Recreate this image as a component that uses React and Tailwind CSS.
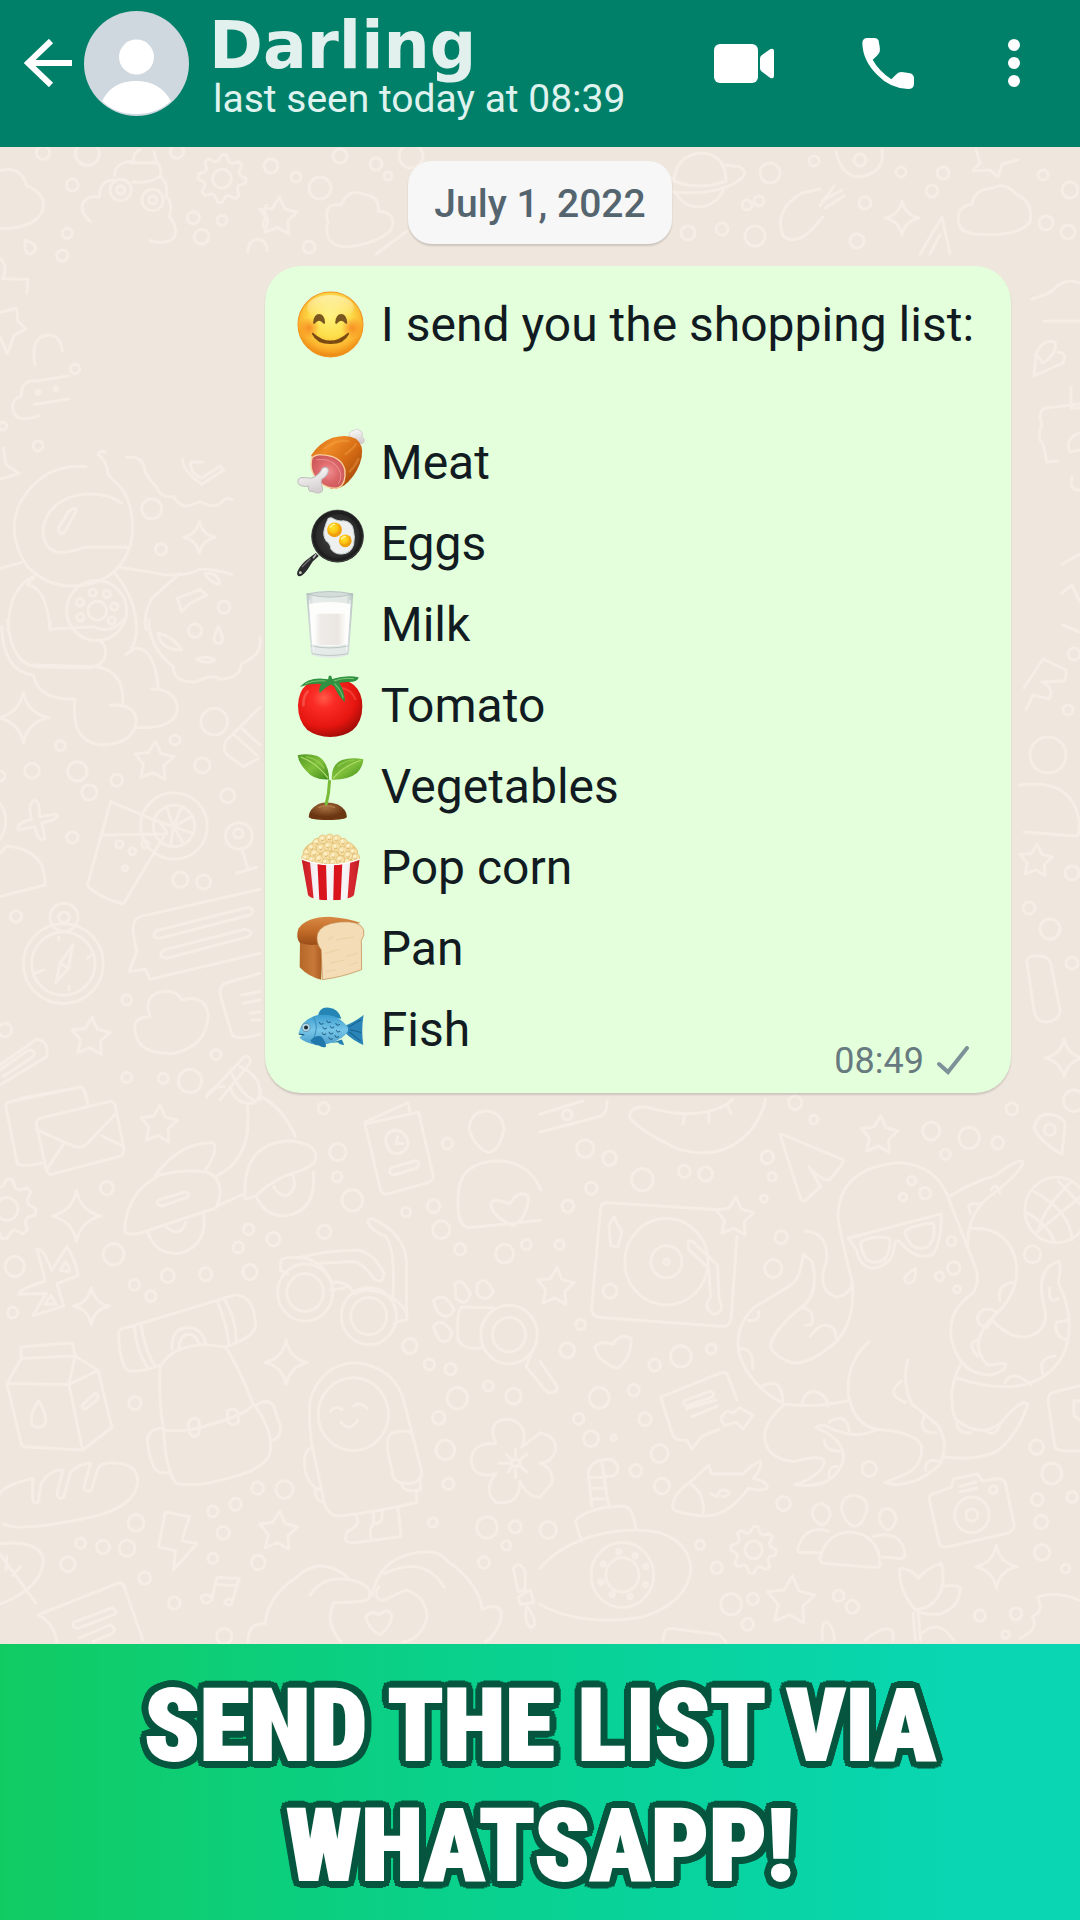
import React from 'react';

const shoppingList = [
  { id: 'meat', label: 'Meat', Icon: MeatIcon },
  { id: 'eggs', label: 'Eggs', Icon: EggsIcon },
  { id: 'milk', label: 'Milk', Icon: MilkIcon },
  { id: 'tomato', label: 'Tomato', Icon: TomatoIcon },
  { id: 'vegetables', label: 'Vegetables', Icon: SproutIcon },
  { id: 'popcorn', label: 'Pop corn', Icon: PopcornIcon },
  { id: 'pan', label: 'Pan', Icon: BreadIcon },
  { id: 'fish', label: 'Fish', Icon: FishIcon },
];

/* ---------- Emoji ---------- */

function Emoji({ viewBox, children }) {
  return (
    <svg viewBox={viewBox} className="size-[67px] shrink-0 overflow-visible" aria-hidden="true">
      {children}
    </svg>
  );
}

function SmileIcon() {
  return (
    <Emoji viewBox="0 0 200 200">
      <defs>
        <radialGradient id="smileFace" cx="50%" cy="38%" r="62%">
          <stop offset="0" stopColor="#fff27a" />
          <stop offset="0.5" stopColor="#fdde4a" />
          <stop offset="0.8" stopColor="#fbb02b" />
          <stop offset="1" stopColor="#ea8412" />
        </radialGradient>
        <radialGradient id="smileCheek">
          <stop offset="0" stopColor="#f6791c" stopOpacity="0.75" />
          <stop offset="1" stopColor="#f6791c" stopOpacity="0" />
        </radialGradient>
        <linearGradient id="smileShine" x2="0" y2="1">
          <stop offset="0" stopColor="#fff" stopOpacity="0.5" />
          <stop offset="1" stopColor="#fff" stopOpacity="0" />
        </linearGradient>
      </defs>
      <circle cx="100" cy="100" r="97" fill="url(#smileFace)" stroke="#f0951f" strokeWidth="3" />
      <ellipse cx="100" cy="50" rx="70" ry="38" fill="url(#smileShine)" />
      <circle cx="36" cy="110" r="32" fill="url(#smileCheek)" />
      <circle cx="164" cy="110" r="32" fill="url(#smileCheek)" />
      <path d="M51 95Q53 72 66 72T81 95Q66 76 51 95ZM117 95Q119 72 132 72T147 95Q132 76 117 95Z" fill="#7a5720" stroke="#7a5720" strokeWidth="6" strokeLinejoin="round" />
      <path d="M47 127Q99 174 153 127Q140 156 100 156T47 127Z" fill="#7a4a12" stroke="#7a4a12" strokeWidth="5" strokeLinejoin="round" />
    </Emoji>
  );
}

function MeatIcon() {
  return (
    <Emoji viewBox="52 58 200 200">
      <defs>
        <linearGradient id="meatSkin" x1="0" x2="1" y2="0.9">
          <stop offset="0" stopColor="#c9640f" />
          <stop offset="0.3" stopColor="#ee8a26" />
          <stop offset="0.6" stopColor="#d46a14" />
          <stop offset="1" stopColor="#97400a" />
        </linearGradient>
        <radialGradient id="meatCut">
          <stop offset="0" stopColor="#f09090" />
          <stop offset="0.6" stopColor="#dd686b" />
          <stop offset="1" stopColor="#cf5a5c" />
        </radialGradient>
        <linearGradient id="meatBone" x2="0.3" y2="1">
          <stop offset="0" stopColor="#fff" />
          <stop offset="1" stopColor="#d5cfd0" />
        </linearGradient>
      </defs>
      <path d="M207 82Q207 62 222 63Q230 54 240 63Q251 67 246 80Q258 92 249 100Q238 107 232 96Z" fill="url(#meatBone)" stroke="#c7c5c8" strokeWidth="2" />
      <path d="M94 137Q118 99 158 84Q202 72 228 87Q252 106 245 142Q237 181 206 215Q184 239 153 237Z" fill="url(#meatSkin)" />
      <path d="M134 116Q172 88 204 94M197 133Q222 115 228 103M209 185Q227 168 235 148" stroke="#f8b04a" strokeWidth="7" fill="none" strokeLinecap="round" opacity="0.35" />
      <path d="M97 143Q109 133 126 135Q184 137 195 180Q199 222 176 233Q150 240 122 219Q85 186 97 143Z" fill="url(#meatCut)" stroke="#fbd3a0" strokeWidth="4" />
      <path d="M109 150Q163 142 181 188Q186 211 174 222" stroke="#f0a0a0" strokeWidth="3" fill="none" opacity="0.7" />
      <path d="M133 173Q147 171 145 185Q142 198 127 207Q121 215 127 229Q133 246 117 249Q106 250 98 244Q85 246 86 229Q65 231 56 221Q50 207 66 203Q80 203 94 205Q114 198 123 184Q126 174 133 173Z" fill="url(#meatBone)" stroke="#c2bec0" strokeWidth="3" />
    </Emoji>
  );
}

function EggsIcon() {
  return (
    <Emoji viewBox="52 301 200 200">
      <defs>
        <radialGradient id="panBody">
          <stop offset="0" stopColor="#4a4a4a" />
          <stop offset="0.8" stopColor="#2b2b2b" />
          <stop offset="1" stopColor="#1a1a1a" />
        </radialGradient>
        <radialGradient id="yolk" cx="40%" cy="35%">
          <stop offset="0" stopColor="#ffe62e" />
          <stop offset="0.7" stopColor="#fcc011" />
          <stop offset="1" stopColor="#ee9d0c" />
        </radialGradient>
      </defs>
      <path d="M117 438L108 429L92 441Q62 462 53 485Q50 498 60 499Q70 498 84 478Q95 462 99 455Z" fill="#2c2c2e" />
      <path d="M109 433L100 445" stroke="#b9b9b9" strokeWidth="5" />
      <path d="M91 447L68 470" stroke="#77777a" strokeWidth="4" strokeLinecap="round" />
      <circle cx="62" cy="488" r="4" fill="#c8d5c4" />
      <circle cx="173" cy="380" r="78" fill="#1b1b1b" />
      <circle cx="173" cy="378" r="77" fill="url(#panBody)" stroke="#5a5a5a" strokeWidth="2" />
      <circle cx="173" cy="379" r="68" fill="none" stroke="#1d1d1d" strokeWidth="3" />
      <path d="M145 327Q154 321 164 329Q176 335 190 333Q215 335 220 359Q226 382 221 405Q212 431 187 432Q168 435 153 417Q152 401 139 393Q128 378 134 357Q138 340 145 327Z" fill="#edf0ee" stroke="#cfd3d3" strokeWidth="3" />
      <circle cx="164" cy="360" r="22" fill="url(#yolk)" />
      <circle cx="196" cy="393" r="19" fill="url(#yolk)" />
      <path d="M151 352Q156 344 164 344M185 387Q189 380 196 380" stroke="#fff6a8" strokeWidth="4" fill="none" strokeLinecap="round" />
    </Emoji>
  );
}

function MilkIcon() {
  return (
    <Emoji viewBox="52 544 200 200">
      <defs>
        <linearGradient id="milkGlass">
          <stop offset="0" stopColor="#b9c4c4" />
          <stop offset="0.15" stopColor="#e6ecea" />
          <stop offset="0.85" stopColor="#e2e9e6" />
          <stop offset="1" stopColor="#b4c0bf" />
        </linearGradient>
        <linearGradient id="milkFill">
          <stop offset="0" stopColor="#fff" />
          <stop offset="0.2" stopColor="#efebe8" />
          <stop offset="0.75" stopColor="#ebe6e1" />
          <stop offset="1" stopColor="#fffefd" />
        </linearGradient>
      </defs>
      <path d="M80 552Q150 534 220 552L207 730Q200 743 150 744Q100 743 94 730Z" fill="url(#milkGlass)" />
      <path d="M81 553Q150 572 219 553Q150 538 81 553Z" fill="#d5dddb" stroke="#a8b6b4" strokeWidth="2" />
      <path d="M88 583Q150 570 212 583L203 702Q150 714 97 702Z" fill="#fdfdfc" />
      <path d="M102 612H199L194 702Q150 709 106 702Z" fill="url(#milkFill)" />
      <path d="M94 708Q150 720 206 708M97 731Q150 742 204 731" stroke="#a9b5b2" strokeWidth="2" fill="none" />
      <path d="M90 570L101 722M211 570L200 722" stroke="#fff" strokeWidth="3" opacity="0.8" />
    </Emoji>
  );
}

function TomatoIcon() {
  return (
    <Emoji viewBox="52 787 200 200">
      <defs>
        <radialGradient id="tomatoBody" cx="40%" cy="32%" r="72%">
          <stop offset="0" stopColor="#ff5a4a" />
          <stop offset="0.25" stopColor="#fb2c25" />
          <stop offset="0.7" stopColor="#e5150f" />
          <stop offset="1" stopColor="#9d0b07" />
        </radialGradient>
      </defs>
      <path d="M80 825Q113 802 150 813Q196 804 222 826Q247 848 247 889Q247 935 218 961Q191 981 151 981Q111 980 83 960Q55 933 55 887Q56 846 80 825Z" fill="url(#tomatoBody)" />
      <path d="M84 845Q70 861 71 886" stroke="#ff9a8c" strokeWidth="8" fill="none" strokeLinecap="round" opacity="0.35" />
      <path d="M186 835Q215 840 226 868" stroke="#ff8070" strokeWidth="7" fill="none" strokeLinecap="round" opacity="0.3" />
      <path d="M60 832Q85 804 128 807L145 809L147 798H154L157 808Q200 795 236 803Q236 817 205 817L178 819Q195 845 195 877Q178 862 163 830L153 824Q133 834 120 850Q115 835 125 823Q92 820 60 832Z" fill="#2f9141" />
      <path d="M77 823Q103 811 137 814M162 814Q190 803 222 807M164 822Q184 842 190 865" stroke="#7cc36d" strokeWidth="3" fill="none" />
    </Emoji>
  );
}

function SproutIcon() {
  return (
    <Emoji viewBox="52 40 200 200">
      <defs>
        <linearGradient id="leaf" x2="1" y2="1">
          <stop offset="0" stopColor="#4f9a24" />
          <stop offset="0.5" stopColor="#80c03a" />
          <stop offset="1" stopColor="#3f8a1c" />
        </linearGradient>
        <radialGradient id="soil" cx="45%" cy="30%">
          <stop offset="0" stopColor="#a9703f" />
          <stop offset="1" stopColor="#6b3713" />
        </radialGradient>
      </defs>
      <path d="M87 230Q88 207 116 192Q144 183 174 194Q200 208 201 230Q200 239 144 240Q88 239 87 230Z" fill="url(#soil)" />
      <path d="M139 193Q148 160 149 124" stroke="#79bb39" strokeWidth="9" fill="none" strokeLinecap="round" />
      <path d="M54 47Q82 39 113 49Q146 65 148 119Q104 123 79 93Q57 70 54 47Z" fill="url(#leaf)" />
      <path d="M156 120Q153 75 186 61Q217 51 250 59Q249 80 231 100Q205 121 156 120Z" fill="url(#leaf)" />
      <path d="M63 52Q109 68 145 115M159 116Q194 77 242 62" stroke="#b4df70" strokeWidth="3" fill="none" />
      <path d="M81 52Q112 55 132 85M174 79Q194 63 221 61" stroke="#a9da62" strokeWidth="5" fill="none" opacity="0.5" strokeLinecap="round" />
      <path d="M117 202Q140 194 164 202" stroke="#c08a58" strokeWidth="4" fill="none" strokeLinecap="round" opacity="0.7" />
    </Emoji>
  );
}

const kernels = [
  [83, 340, 13], [78, 355, 12], [96, 325, 13], [112, 309, 13], [129, 299, 13], [150, 296, 13], [171, 299, 13],
  [190, 309, 13], [207, 322, 13], [220, 338, 13], [227, 354, 12], [105, 342, 14], [124, 326, 14], [146, 320, 14],
  [168, 323, 14], [188, 334, 14], [205, 348, 13], [97, 361, 12], [119, 358, 13], [140, 346, 14], [162, 349, 14],
  [181, 360, 13], [203, 366, 10], [138, 368, 11], [160, 369, 11],
];

function PopcornIcon() {
  return (
    <Emoji viewBox="52 283 200 200">
      <defs>
        <clipPath id="bucket">
          <path d="M66 358Q152 391 239 358L222 465Q210 480 152 481Q95 480 85 465Z" />
        </clipPath>
        <linearGradient id="bucketShade">
          <stop offset="0" stopColor="#700" stopOpacity="0.3" />
          <stop offset="0.3" stopColor="#fff" stopOpacity="0" />
          <stop offset="0.7" stopColor="#fff" stopOpacity="0" />
          <stop offset="1" stopColor="#700" stopOpacity="0.35" />
        </linearGradient>
      </defs>
      <ellipse cx="152" cy="340" rx="82" ry="44" fill="#e9c981" />
      {kernels.map(([x, y, r]) => (
        <g key={`${x}-${y}`}>
          <circle cx={x} cy={y} r={r} fill="#f6e0a6" stroke="#dfbd74" strokeWidth="2" />
          <path d={`M${x - 5} ${y + 3}q5 5 9 -2`} stroke="#c39a4c" strokeWidth="2" fill="none" />
          <circle cx={x - 3} cy={y - 4} r="4" fill="#fdf3cf" />
        </g>
      ))}
      <g clipPath="url(#bucket)">
        <path d="M60 340H245V490H60Z" fill="#f6f3f7" />
        <path d="M64 350H89L103 490H82ZM112 350H138L142 490H119ZM163 350H188L182 490H160ZM212 350H242L224 490H202Z" fill="#d9141c" />
        <path d="M60 340H245V490H60Z" fill="url(#bucketShade)" />
      </g>
      <path d="M66 358Q152 391 239 358" stroke="#fff" strokeWidth="4" fill="none" />
    </Emoji>
  );
}

function BreadIcon() {
  return (
    <Emoji viewBox="52 526 200 200">
      <defs>
        <linearGradient id="crustTop" x2="0" y2="1">
          <stop offset="0" stopColor="#d98a45" />
          <stop offset="0.5" stopColor="#c26c28" />
          <stop offset="1" stopColor="#9a4d18" />
        </linearGradient>
        <linearGradient id="crustSide">
          <stop offset="0" stopColor="#b46728" />
          <stop offset="0.6" stopColor="#c8793a" />
          <stop offset="1" stopColor="#a9591f" />
        </linearGradient>
      </defs>
      <path d="M61 600L115 612L128 624L124 719Q86 710 60 682Z" fill="url(#crustSide)" />
      <path d="M60 609Q48 593 56 567Q80 531 149 531Q204 535 242 550L130 570L114 614Q83 618 60 609Z" fill="url(#crustTop)" />
      <path d="M128 719L124 630Q107 608 113 583Q122 553 178 547Q240 541 251 570Q255 588 244 602L245 689Q190 711 128 719Z" fill="#f3dcb6" stroke="#c08346" strokeWidth="2" />
      <path d="M135 640L180 629M150 670L190 661M170 600L220 592M145 600L160 590M200 650L230 641M208 676L232 668M141 695L166 690" stroke="#ecd0a4" strokeWidth="3" strokeLinecap="round" />
    </Emoji>
  );
}

function FishIcon() {
  return (
    <Emoji viewBox="52 769 200 200">
      <defs>
        <linearGradient id="fishBody" x2="0" y2="1">
          <stop offset="0" stopColor="#3a9ccf" />
          <stop offset="0.5" stopColor="#76c6e8" />
          <stop offset="1" stopColor="#4a9ecb" />
        </linearGradient>
      </defs>
      <path d="M114 829Q120 799 148 804Q177 808 184 837Z" fill="#2585b5" />
      <path d="M188 861Q228 845 251 825Q243 869 250 915Q221 904 192 876Z" fill="#2b84b8" />
      <path d="M207 861L243 840M210 870L244 878M208 876L242 904" stroke="#17628f" strokeWidth="3" />
      <path d="M152 909L186 899L193 915Q180 915 174 907Z" fill="#2480b0" />
      <path d="M56 880Q66 838 114 826Q173 818 204 863Q206 876 198 883Q174 910 116 916Q74 910 59 893L70 884Z" fill="url(#fishBody)" />
      <path d="M101 833Q121 864 94 909" stroke="#3b8ebb" strokeWidth="3" fill="none" />
      <path d="M92 902Q108 883 125 890Q140 908 138 921Q129 925 116 916Q105 918 92 902Z" fill="#1f77ac" />
      <path d="M119 848q4 9 11 3M141 843q4 9 11 3M129 862q4 9 11 3M151 859q4 9 11 3M168 851q4 9 11 3M127 879q4 9 11 3M148 877q4 9 11 3M169 871q4 9 11 3M147 893q4 9 11 3M165 887q4 9 11 3" stroke="#25648b" strokeWidth="3" fill="none" strokeLinecap="round" />
      <circle cx="79" cy="863" r="12" fill="#b9dbe8" stroke="#4d7e96" strokeWidth="2" />
      <circle cx="79" cy="863" r="6" fill="#1f2c35" />
      <path d="M59 883L72 885" stroke="#155a82" strokeWidth="4" strokeLinecap="round" />
    </Emoji>
  );
}

/* ---------- Wallpaper ---------- */

function starPath(cx, cy, r) {
  const points = [];
  for (let i = 0; i < 10; i++) {
    const a = (i * Math.PI) / 5 - 1.5;
    const d = i % 2 ? r * 0.52 : r;
    points.push(`${(cx + d * Math.cos(a)).toFixed(1)} ${(cy + d * Math.sin(a)).toFixed(1)}`);
  }
  return `M${points.join('L')}Z`;
}

function sparklePath(x, y, r) {
  const k = r * 0.17;
  return `M${x} ${y - r}Q${x + k} ${y - k} ${x + r} ${y}Q${x + k} ${y + k} ${x} ${y + r}Q${x - k} ${y + k} ${x - r} ${y}Q${x - k} ${y - k} ${x} ${y - r}Z`;
}

function gearPath(cx, cy, r) {
  const points = [];
  for (let i = 0; i < 32; i++) {
    const a = (i * Math.PI) / 16;
    const d = i % 4 < 2 ? r : r * 0.76;
    points.push(`${(cx + d * Math.cos(a)).toFixed(1)} ${(cy + d * Math.sin(a)).toFixed(1)}`);
  }
  return `M${points.join('L')}Z`;
}

function Bubbles({ items }) {
  return items.map(([x, y, r]) => <circle key={`${x}-${y}`} cx={x} cy={y} r={r} />);
}

function Wallpaper() {
  return (
    <svg
      viewBox="0 147 1080 1497"
      preserveAspectRatio="xMidYMin slice"
      className="absolute inset-0 size-full [&_*]:[vector-effect:non-scaling-stroke]"
      fill="none"
      stroke="#f6ede7"
      strokeWidth="3"
      strokeLinecap="round"
      strokeLinejoin="round"
      aria-hidden="true"
    >
      {/* top row behind the date */}
      <g>
        <Bubbles
          items={[
            [271, 166, 7], [296, 177, 5], [320, 188, 11], [340, 156, 7], [376, 164, 6], [388, 176, 4], [411, 156, 12],
            [309, 247, 6], [770, 173, 10], [814, 161, 5], [901, 172, 5], [943, 173, 6], [932, 191, 6], [865, 203, 6],
            [747, 205, 5], [759, 201, 5], [688, 233, 7], [722, 229, 6], [755, 236, 10], [857, 241, 7], [860, 160, 6],
            [1043, 175, 5], [1070, 190, 8], [1046, 223, 7], [1068, 232, 7],
          ]}
        />
        <path d={starPath(278, 217, 20)} />
        <path d={sparklePath(902, 218, 17)} />
        <path d="M328 222Q322 203 341 205Q349 187 366 195Q380 197 378 211Q398 212 391 230Q377 244 345 247Q322 244 328 222ZM376 254L406 232" />
        <path d="M674 181Q676 155 702 153Q726 155 726 181Q700 191 674 181ZM672 178Q661 188 674 192Q714 196 738 181Q750 173 740 167L726 165M676 193Q684 207 699 207Q718 205 724 188" />
        <path d="M783 236Q773 210 802 193L820 189M783 236Q797 247 815 226L823 217M820 206L834 186M822 201L842 190M825 208L844 196" />
        <path d="M836 152Q842 177 860 177Q885 173 882 150M976 150L980 163L973 171L990 170L998 177L1002 164L1018 160" />
        <path d="M959 223Q955 207 972 204Q974 189 993 188Q1005 181 1017 195Q1033 201 1030 222Q1017 238 974 234Q960 232 959 223ZM920 254L942 217L950 254M930 254L940 235" />
        <path d="M1032 299Q1050 294 1054 289Q1066 277 1080 283M1044 321H1080M1036 354Q1043 338 1055 342Q1058 353 1043 363L1036 354L1034 376L1063 363Q1068 353 1058 352M1080 404L1046 408Q1037 410 1042 425Q1036 437 1043 444L1047 462L1058 461M1071 387V408H1080M1080 433Q1064 438 1070 452L1080 450M1072 477Q1068 490 1080 490M1062 564L1080 554M1062 593L1072 585L1080 602M1063 625L1080 632" />
        <path d="M1024 688L1043 659L1066 670Q1067 683 1060 681L1042 682Q1055 688 1049 699L1033 695L1026 710" />
        <circle cx="1048" cy="755" r="18" />
        <path d="M1020 785Q1072 778 1079 820Q1080 836 1076 836L1024 832" />
        <path d={starPath(1036, 861, 17)} />
        <Bubbles items={[[1068, 710, 5], [1074, 654, 6], [1072, 873, 7], [1029, 908, 6], [1050, 929, 10], [1072, 963, 6]]} />
        <path d="M1027 962Q1026 955 1040 956Q1048 956 1051 964L1060 1010Q1060 1021 1046 1022Q1036 1022 1034 1010Z" />
        <path d={sparklePath(1064, 1058, 19)} />
      </g>

      {/* upper left */}
      <g transform="translate(0 150) scale(0.3333)">
        <Bubbles
          items={[
            [129, 8, 20], [262, 10, 36], [531, 5, 20], [217, 105, 18], [202, 250, 15], [187, 317, 17], [580, 203, 18],
            [666, 211, 15], [605, 260, 22], [225, 657, 14], [666, 86, 28], [362, 120, 32], [362, 120, 12], [458, 150, 32],
            [458, 150, 12], [8, 828, 12], [114, 888, 15], [455, 1077, 30], [483, 1198, 17], [672, 1372, 18], [115, 727, 6],
            [168, 716, 6],
          ]}
        />
        <path d={gearPath(666, 86, 72)} />
        <path d={sparklePath(598, 1162, 48)} />
        <path d="M0 62Q62 45 80 107Q135 130 130 172Q117 235 0 236M272 215Q235 185 251 155Q263 136 299 141Q297 92 340 90M343 78Q345 35 400 34Q400 5 420 0M389 38H470Q490 55 480 80Q440 102 398 96M470 38L462 5M482 82Q505 96 499 140Q520 160 508 200Q540 240 518 268Q490 285 450 272M795 235Q780 225 800 200Q785 180 800 165M744 305Q745 268 775 267Q800 270 802 302M75 270Q110 280 107 300Q85 325 75 297Z" />
        <path d="M0 325Q25 350 8 386L84 388L80 430M0 487L50 475L53 513L77 537L42 555L22 612L0 560M105 645Q90 555 148 555Q180 555 187 603M118 797Q40 825 37 770Q38 745 63 740Q65 685 110 693L205 678M104 763Q150 757 205 747M10 895L18 945L58 970L0 988" />
        <path d="M258 950Q130 940 62 1055Q15 1150 82 1250Q150 1320 250 1306Q360 1290 393 1180Q410 1080 365 1015L325 975Q320 930 295 915Q300 900 315 905M365 1060Q320 1025 240 1034Q150 1050 130 1130Q125 1200 180 1208Q220 1205 250 1192H380M205 1085Q230 1065 228 1085L195 1145Q178 1160 175 1135Z" />
        <path d="M380 922Q430 915 435 965Q455 1000 470 1010Q480 1045 520 1040Q540 1072 565 1068L600 1055Q640 1075 660 1062Q675 1040 697 1048M548 928Q545 960 605 1003L672 960L660 948L605 985Q565 965 573 935L608 937" />
        <path d="M0 1255L65 1238M355 1252Q430 1262 490 1274Q560 1280 600 1257Q650 1258 695 1273M345 1270Q410 1350 410 1440M540 1270L455 1345Q425 1410 440 1440M105 1278Q25 1310 25 1440M105 1278L82 1305Q140 1310 150 1440M532 1345L600 1318L620 1335L570 1360L545 1385ZM615 1270Q660 1270 658 1303Q630 1300 615 1270Z" />
        <circle cx="290" cy="1382" r="90" />
        <Bubbles items={[[292, 1382, 28], [278, 1328, 11], [320, 1332, 11], [240, 1357, 11], [343, 1370, 11], [241, 1402, 11], [335, 1412, 11]]} />
      </g>

      {/* left edge */}
      <g transform="translate(0 620) scale(0.3333)">
        <Bubbles
          items={[
            [585, 32, 20], [643, 305, 40], [181, 377, 15], [525, 360, 15], [96, 452, 22], [232, 454, 29], [350, 481, 18],
            [268, 517, 23], [607, 436, 23], [0, 468, 15], [683, 527, 21], [217, 652, 17], [541, 779, 23], [611, 786, 21],
            [358, 673, 11], [436, 673, 11], [397, 694, 10], [375, 745, 8], [48, 889, 17], [380, 1140, 15], [15, 1230, 20],
            [648, 1304, 15], [380, 1373, 15], [490, 1375, 15], [570, 1383, 35], [717, 648, 40], [715, 640, 14],
            [522, 618, 100], [522, 618, 62], [190, 1031, 120], [190, 1031, 95], [192, 892, 42], [192, 892, 16],
          ]}
        />
        <path d={sparklePath(70, 293, 76)} />
        <path d={starPath(462, 425, 62)} />
        <path d={starPath(272, 1252, 60)} />
        <path d="M22 0Q35 135 110 140L270 144Q330 130 313 75L298 60M5 20Q10 155 100 165Q115 240 225 238Q210 370 310 375Q405 370 409 300Q400 250 330 256M100 135L290 140Q375 155 368 250M409 322Q530 330 533 260Q520 205 455 207M475 207Q465 80 405 85L378 103M408 0Q415 50 395 85M150 0V28L280 20Q330 45 370 0M447 0Q445 80 520 140Q520 190 590 185Q640 160 660 178Q720 175 725 130Q790 105 780 50M475 40Q480 90 545 90Q520 50 475 40ZM655 20Q630 70 655 70T655 20ZM590 118Q620 105 645 120Q620 135 590 118Z" />
        <path d="M780 262L680 360Q665 385 682 405L730 440L775 415M725 325L780 375M700 342L770 405M105 540Q120 545 118 590L170 582Q180 600 125 608L135 655Q115 670 105 620L55 630Q45 610 95 598Q80 550 105 540Z" />
        <path d="M332 545L262 795Q290 830 370 852L500 635L480 607ZM307 645L500 642M520 620L465 600M520 620L500 562M520 620L545 560M520 620L575 590M520 620L580 640M520 620L550 670M520 620L512 678M0 550Q35 600 0 658M0 830L135 795Q140 690 20 678L0 700M725 685L745 750M710 760L770 742" />
        <path d="M218 975L205 1045L168 1088L180 1030ZM180 1030L205 1045M177 950V960M275 1005L262 1015M105 1060L130 1050M207 1110V1098" />
        <path d="M780 808L420 890Q395 900 400 940L410 995L388 1055L437 1048L450 1078L780 1000M470 932L745 862Q770 870 750 885L480 955Q450 955 470 932ZM490 990L735 928Q765 935 745 950L500 1015Q470 1010 490 990Z" />
        <path d="M405 1230Q400 1190 450 1190Q425 1120 500 1113Q535 1115 545 1140Q615 1120 625 1185Q620 1280 520 1300Q410 1305 405 1230ZM780 1060L675 1090Q655 1100 662 1130L695 1240Q700 1265 780 1243M725 1125L780 1115M730 1150L780 1140M750 1180L780 1175M755 1200L780 1200M0 1335L110 1258Q150 1265 140 1310L0 1395M0 1350L85 1290Q110 1290 100 1310L10 1370M60 1435L240 1402Q255 1405 260 1440M620 1430L735 1308Q755 1310 750 1330L660 1440M690 1350Q720 1420 760 1440M720 1340Q790 1370 780 1440" />
      </g>

      {/* lower left */}
      <g transform="translate(0 1090) scale(0.3444 0.3571)">
        <Bubbles
          items={[
            [940, 51, 16], [981, 174, 24], [979, 243, 14], [1023, 309, 30], [310, 275, 19], [330, 460, 30], [43, 494, 28],
            [37, 623, 15], [722, 390, 15], [794, 418, 19], [692, 441, 15], [942, 397, 19], [726, 510, 21], [487, 520, 19],
            [597, 516, 18], [390, 546, 15], [438, 577, 15], [1179, 342, 13], [1259, 325, 18], [1281, 391, 25], [1336, 446, 16],
            [1465, 458, 26], [1528, 433, 14], [1299, 150, 15], [1190, 717, 21], [1247, 769, 15], [1308, 782, 16],
            [1418, 829, 14], [1328, 863, 30], [1491, 857, 22], [1274, 918, 18], [1293, 1008, 27], [1302, 1103, 16],
            [392, 877, 18], [748, 1115, 17], [826, 1119, 25], [684, 1160, 17], [618, 1180, 15], [648, 1240, 18],
            [395, 1212, 23], [369, 1283, 23], [299, 1280, 19], [234, 1269, 14], [197, 1328, 21], [618, 1311, 14],
            [750, 1323, 20], [420, 1367, 17], [506, 1437, 17], [651, 1530, 22], [1257, 1211, 13], [1414, 1225, 30],
            [1496, 1223, 17], [1470, 1275, 13], [1405, 1323, 16], [20, 333, 32], [886, 567, 80], [886, 567, 53],
            [1071, 633, 80], [1071, 633, 52], [1478, 685, 82], [1478, 685, 48], [1026, 908, 102],
          ]}
        />
        <path d={starPath(461, 98, 56)} />
        <path d={starPath(808, 1237, 58)} />
        <path d={sparklePath(222, 353, 72)} />
        <path d={sparklePath(265, 605, 52)} />
        <path d={sparklePath(831, 763, 62)} />
        <path d={gearPath(20, 333, 84)} />
        <path d="M18 50Q14 35 30 32L235 -8Q250 0 255 42M18 50L50 205Q55 217 120 205M105 95Q105 82 120 78L318 32Q330 30 335 45L360 165Q360 180 350 185L155 235Q140 240 135 225ZM107 112L215 158Q240 165 255 148L334 68M185 150L138 220M295 128L356 157" />
        <path d="M362 395Q365 290 460 240Q520 220 600 230Q645 245 638 300L628 330Q500 370 410 400Q365 410 362 395ZM450 242Q520 145 620 148Q635 170 595 227M460 308L535 286Q555 288 545 300L470 325Q450 320 460 308ZM430 400Q450 460 520 458Q600 440 592 350M485 385Q520 415 540 372M630 240Q735 190 718 45M760 20Q820 50 858 130M630 325L710 290M712 305Q700 150 840 142Q930 150 915 200Q900 220 830 240Q780 260 742 298ZM745 300Q770 355 830 352Q920 340 910 230M795 270Q810 300 835 295Q865 275 850 240M600 20Q610 -10 650 -10M668 -10Q680 38 730 38Q755 30 755 0" />
        <path d="M107 445Q125 440 150 505L195 438Q225 490 226 520L165 542L185 605L95 632L135 570L55 572Q50 560 132 535ZM175 505L190 480Q205 500 200 508ZM130 600L148 575L162 600Z" />
        <path d="M815 480Q820 465 870 470Q930 470 965 540Q1000 530 1030 570Q1080 545 1150 590Q1190 620 1180 645Q1160 645 1145 655M815 480V505L835 515M865 470Q940 450 1040 448Q1090 460 1115 515Q1110 545 1088 530Q1050 480 1025 480L930 485M1080 360Q1175 400 1180 480V630M1070 375Q1080 395 1120 410Q1150 450 1140 585M1070 375Q1065 360 1080 360M960 560L1000 555" />
        <path d="M345 695Q340 665 370 665L685 573Q740 580 742 660Q740 690 660 718M345 695Q350 770 370 785Q400 795 465 770M390 662Q395 730 430 780M410 658Q420 730 450 772M630 590Q660 660 665 715M650 582Q690 650 685 708M500 725Q495 665 550 665Q590 670 598 715M520 722Q520 685 550 683Q575 690 577 715M465 775Q500 715 600 713L655 720Q690 770 735 880Q720 910 570 948Q500 960 475 950Q460 870 465 775ZM475 950Q480 1060 510 1100Q570 1120 720 1070Q790 1040 785 1000Q790 950 740 885Q775 860 795 885L815 945Q815 975 788 983M475 945Q430 950 428 980Q435 1060 465 1072L488 1072M545 935Q560 910 578 925V960Q565 980 550 960ZM660 900Q680 885 692 905V930Q680 945 662 930Z" />
        <path d="M60 720L210 708L218 745L62 752ZM62 752L20 822L62 992Q65 1000 80 1000L240 1008L200 825L20 822M218 745L200 825M218 745L285 785L200 825M285 785L325 945L240 1008M112 870Q85 910 92 935Q110 955 130 935Q140 915 112 870ZM240 882L275 850Q290 850 282 867L250 892Q235 895 240 882Z" />
        <path d="M0 1130Q15 1105 95 1088V1150Q105 1165 112 1150L120 1100Q150 1060 183 1065L165 1130Q170 1150 185 1140L205 1070Q230 1045 263 1045L243 1115Q250 1130 265 1120L285 1060Q295 1040 340 1045Q400 1050 400 1095Q395 1165 270 1195Q50 1240 10 1215M0 1270Q110 1260 125 1310Q130 1390 0 1440M0 1300L105 1438M35 1360L60 1335M18 1345L20 1305" />
        <path d="M480 1182L550 1195L528 1262L572 1270L503 1345L510 1290L460 1280ZM110 1470L345 1380Q355 1380 360 1390L415 1540M110 1470Q155 1490 165 1545M215 1490L325 1450Q345 1460 330 1470L225 1508Q205 1505 215 1490ZM230 1535L320 1498Q345 1510 320 1525L270 1545M583 1420Q605 1405 615 1425Q610 1440 590 1435ZM615 1425L630 1365L695 1368L675 1430M630 1385L685 1388M652 1435Q665 1415 675 1435Q665 1450 652 1435Z" />
        <path d="M900 870Q930 770 1030 763Q1150 775 1175 880L1225 1070Q1220 1110 1165 1100Q1135 1090 1140 1070Q1110 970 1140 960Q1180 950 1190 960M900 870Q895 920 905 990L940 1150Q950 1195 990 1193Q1100 1180 1210 1155V1120M905 1000Q880 1010 885 1060Q895 1110 930 1120M915 1120Q915 1150 940 1155M1165 1100Q1170 1130 1220 1120V1090M960 900Q975 880 993 895M1027 885Q1045 870 1065 892M990 930Q1015 960 1038 925M1035 1195Q1050 1220 1010 1235Q990 1270 1030 1268L1165 1250Q1160 1200 1155 1170M1085 1185V1215Q1070 1230 1078 1258M1110 1180Q1110 1220 1088 1212" />
        <path d="M1060 90L1185 35L1190 60M1060 95L1215 62L1258 240Q1260 255 1240 260L1130 290Q1110 295 1105 280ZM1120 145Q1120 110 1155 113Q1190 125 1183 160Q1160 190 1130 170ZM1155 130L1150 150L1170 150M1135 218L1205 198Q1225 205 1210 218L1145 238Q1125 235 1135 218ZM1362 110Q1365 60 1415 58Q1460 65 1463 110Q1450 175 1415 175Q1375 155 1362 110ZM1330 300Q1330 200 1450 198Q1540 205 1570 280M1330 300Q1325 390 1370 385L1570 365M1425 320Q1430 300 1480 318Q1510 275 1535 300Q1530 360 1490 380Q1430 355 1425 320Z" />
        <path d="M1320 545Q1340 520 1365 570Q1355 610 1325 585ZM1385 545Q1410 515 1433 565Q1410 600 1385 570ZM1258 590Q1290 560 1318 615Q1300 650 1270 620ZM1258 665Q1280 630 1312 680Q1305 715 1275 700ZM1430 610L1340 608Q1325 620 1330 700Q1345 730 1400 722M1540 745L1528 775L1570 825" />
        <path d="M1440 990Q1410 920 1480 922Q1540 940 1515 1000M1440 990Q1370 985 1368 1040Q1375 1090 1440 1075Q1400 1120 1440 1155Q1510 1165 1510 1095Q1530 1140 1568 1140M1515 1000L1568 960M1450 1045H1475M1497 1005V1025M1470 1020L1483 1032M1530 1020L1510 1035M1530 1070L1512 1055M1475 1070L1483 1058M1497 1085V1065M1482 1045Q1497 1025 1512 1045Q1497 1065 1482 1045" />
        <path d="M720 1545Q720 1490 770 1495Q775 1420 860 1365Q930 1300 1010 1365M900 1415Q935 1360 1010 1370Q1090 1385 1070 1425Q1060 1435 970 1435Q940 1490 990 1545M1080 1415Q1100 1320 1190 1300Q1270 1280 1300 1320Q1390 1380 1400 1455Q1460 1430 1455 1480Q1440 1530 1410 1545M1115 1355Q1230 1300 1290 1392M1100 1390Q1080 1420 1110 1430L1180 1400Q1240 1420 1240 1480Q1220 1540 1170 1545M1062 1475Q1080 1455 1100 1470Q1130 1445 1138 1475Q1130 1510 1103 1525Q1070 1510 1062 1475ZM1490 1340Q1510 1315 1525 1350V1400L1505 1405ZM1505 1420L1540 1400L1550 1435L1510 1440ZM1530 1445Q1570 1500 1540 1505Q1520 1490 1530 1445Z" />
      </g>

      {/* lower right */}
      <g transform="translate(540 1090) scale(0.3444 0.3571)">
        <Bubbles
          items={[
            [79, 69, 14], [131, 164, 25], [202, 191, 20], [297, 251, 31], [149, 275, 17], [81, 325, 17], [419, 228, 17],
            [481, 235, 20], [741, 36, 19], [795, 83, 12], [660, 188, 18], [674, 243, 12], [650, 304, 10], [700, 412, 18],
            [677, 500, 25], [1136, 115, 25], [1177, 180, 14], [1246, 134, 30], [1329, 148, 17], [1370, 53, 17],
            [1480, 111, 16], [1550, 30, 30], [1079, 254, 12], [1054, 300, 11], [1118, 289, 16], [1195, 423, 13],
            [1201, 499, 18], [1160, 522, 12], [1211, 558, 10], [1430, 460, 24], [57, 434, 13], [203, 563, 20],
            [118, 657, 14], [79, 729, 21], [409, 746, 30], [497, 725, 14], [333, 770, 17], [272, 841, 16], [172, 862, 29],
            [112, 921, 15], [305, 922, 18], [148, 976, 22], [214, 974, 8], [347, 1018, 25], [278, 1066, 17], [354, 1109, 22],
            [24, 1232, 24], [465, 1274, 13], [513, 1338, 16], [555, 1440, 30], [618, 1425, 16], [603, 1496, 17],
            [707, 1158, 20], [956, 1061, 21], [867, 1416, 16], [907, 1447, 18], [1442, 1000, 20], [1486, 1074, 29],
            [1444, 1147, 17], [1545, 1140, 15], [1455, 1210, 19], [1458, 1295, 22], [1526, 1340, 12], [1382, 1467, 17],
            [1277, 1472, 16], [1352, 1525, 11], [1316, 1119, 11], [367, 481, 121], [367, 481, 45], [367, 481, 8],
            [1500, 336, 92], [1254, 1190, 50], [1254, 1190, 17], [620, 1288, 25], [239, 1358, 91], [239, 1358, 48],
            [184, 1327, 6], [229, 1293, 6], [276, 1304, 6], [307, 1335, 6], [306, 1385, 6], [261, 1419, 6], [210, 1412, 6],
            [177, 1378, 6],
          ]}
        />
        <path d={starPath(985, 128, 56)} />
        <path d={starPath(565, 357, 58)} />
        <path d={starPath(45, 553, 56)} />
        <path d={starPath(728, 1432, 72)} />
        <path d={sparklePath(1325, 1335, 60)} />
        <path d={gearPath(620, 1288, 66)} />
        <path d="M0 118L170 75Q195 70 195 30M0 68L125 30M260 75Q260 45 310 48Q400 75 480 62Q540 50 560 25M260 75Q280 110 400 165Q520 200 600 125Q645 80 655 25M420 70L415 95M490 65V90M545 45L555 65M697 125Q700 122 710 127L880 195Q885 205 840 252Q820 255 780 215L815 270L770 310Q760 315 755 300Z" />
        <path d="M515 335L195 315Q175 315 175 340L150 610Q150 635 175 637L535 662Q550 660 555 640L572 410M430 425Q440 415 460 440L515 490L520 585Q540 620 505 628Q470 610 495 580L490 500L430 445ZM200 380L215 355L225 375L238 400L225 440L205 435Z" />
        <path d="M865 350Q870 220 1040 203Q1150 210 1185 300L1265 500Q1280 540 1255 570Q1180 620 1195 700Q1220 800 1310 798Q1360 785 1350 765L1300 770Q1260 730 1278 690Q1290 660 1310 640M865 350Q870 400 905 530Q920 640 860 705Q770 780 720 760Q660 735 672 705Q690 660 770 600Q810 560 790 480L765 460Q755 530 730 545L620 610Q560 670 580 745Q610 830 710 880Q800 890 895 870M770 395Q840 400 832 480Q800 560 860 580Q900 575 907 540M1185 300Q1250 260 1320 240Q1390 190 1403 200Q1400 230 1290 310Q1240 360 1242 440M1248 388Q1370 380 1385 500Q1385 580 1310 640Q1360 700 1420 690Q1480 670 1465 610Q1435 500 1505 480Q1515 490 1505 540Q1560 650 1520 740Q1440 880 1205 805M955 705Q890 760 895 850Q910 940 980 950Q1100 960 1108 1000Q1110 1060 1050 1080L1000 1100Q1080 1120 1160 1050Q1190 990 1155 940Q1110 900 1080 880Q1050 820 1068 755M710 880Q650 930 652 975Q660 1035 740 1040Q820 1020 825 1040Q820 1080 740 1105Q850 1120 880 1040Q890 980 800 945Q820 930 850 950Q920 980 980 950M1220 770Q1180 850 1205 920Q1280 980 1340 930Q1400 860 1417 880Q1390 960 1330 1010Q1270 1040 1175 1028" />
        <path d="M895 415L1165 347Q1165 430 1140 460Q1090 480 1045 425Q1030 415 1028 440Q1025 490 965 500Q925 490 920 450ZM932 425Q970 405 1015 415Q1020 450 1000 475Q970 490 950 475Q930 450 932 425ZM1060 395Q1090 375 1143 373Q1150 420 1125 440Q1100 450 1080 435Q1060 415 1060 395ZM1090 500Q1095 545 1065 540Q1045 525 1090 500" />
        <path d="M605 645Q640 650 635 620M580 725Q620 720 618 780M645 830Q700 800 705 870M760 880Q770 840 800 845Q835 855 835 885M755 610Q800 610 790 655L770 660M785 690Q820 640 855 670L862 705M1250 345Q1230 310 1282 320M1310 280Q1325 255 1335 290M1380 540Q1325 540 1335 590M1270 640Q1280 600 1325 620L1300 665Q1270 660 1270 640M1275 700Q1235 705 1270 745M1505 585Q1475 600 1480 555M1530 700Q1490 690 1500 650L1530 645M1350 820Q1370 780 1425 825M1460 795Q1445 750 1495 745M1060 875Q1000 850 1050 815M1115 915Q1095 960 1150 960M840 930Q890 900 898 955M825 980Q830 1015 872 1010M1210 925Q1210 965 1250 960M1295 955Q1320 975 1337 935M1120 1065Q1115 1030 1160 1040M840 1085Q835 1050 865 1055" />
        <path d="M1435 105Q1445 65 1480 68Q1525 75 1525 100L1515 180Q1445 140 1435 105ZM1435 285Q1540 340 1545 420M1408 340Q1480 380 1493 425M1505 255L1568 320M1440 400L1568 300M1448 395Q1460 330 1540 260" />
        <path d="M160 720Q170 700 212 712Q230 680 265 695Q265 750 225 780Q165 760 160 720ZM350 860L525 792Q540 788 545 800L572 868M350 860L385 965Q395 985 425 980L442 1005L470 970L520 950M420 870L495 843Q510 850 500 860L425 885Q410 880 420 870ZM425 893L510 868M440 915L515 885M525 920Q540 890 560 905L580 890L618 910L590 950L570 930L535 940ZM0 760L50 830Q50 850 25 848L0 825M0 960Q50 970 45 1010Q30 1045 0 1045Q40 1060 35 1100L0 1140" />
        <path d="M150 1165L140 1070Q150 1030 210 1035Q240 1060 215 1080L185 1083L200 1165M145 1085H190M147 1115H193M150 1145H198M180 1045L185 1080M120 1262L103 1210Q105 1190 180 1170L240 1165Q270 1165 278 1230M0 1340Q50 1280 150 1250Q260 1220 350 1240Q440 1270 438 1350Q420 1440 300 1475Q120 1505 0 1440M385 1170Q385 1130 440 1095L490 1050L498 1075H590Q620 1045 640 1040Q645 1060 620 1088Q660 1095 660 1115Q640 1125 605 1115Q540 1200 470 1192Q390 1185 385 1170ZM440 1105Q480 1130 473 1190M495 1130L515 1140Q520 1110 550 1125Q545 1140 530 1138" />
        <path d="M875 1170Q880 1135 912 1135Q950 1140 950 1170Q940 1220 912 1222Q885 1215 875 1170ZM790 1185Q795 1158 818 1158Q842 1165 843 1190Q835 1217 818 1218Q795 1210 790 1185ZM985 1200Q985 1172 1010 1172Q1035 1180 1033 1205Q1025 1230 1008 1232Q988 1220 985 1200ZM812 1315Q830 1240 900 1238Q985 1245 988 1330Q985 1338 970 1337L820 1325ZM838 1235Q770 1215 748 1285Q745 1295 760 1295L812 1296M968 1250Q1050 1230 1060 1300Q1060 1312 1045 1312L995 1308" />
        <path d="M1130 1145Q1130 1130 1150 1128L1195 1112L1200 1090L1270 1075L1285 1095L1330 1088Q1350 1088 1352 1105L1377 1220Q1375 1235 1355 1242L1190 1278Q1160 1285 1158 1265ZM1220 1110L1265 1098M1220 1125L1268 1115M1475 870Q1475 850 1495 845L1568 828M1475 870L1495 1000Q1505 1015 1568 1010M1568 870H1550V910L1568 925" />
        <path d="M1090 1455Q1040 1400 1045 1340Q1080 1340 1098 1368Q1120 1340 1165 1325Q1180 1380 1155 1420Q1130 1455 1090 1455ZM1170 1390Q1200 1385 1220 1392Q1220 1450 1160 1468Q1120 1470 1095 1460M1083 1465L1090 1540M1098 1462L1105 1540M1110 1520Q1160 1480 1200 1540M1395 1535Q1450 1510 1430 1475Q1465 1460 1445 1420Q1500 1400 1568 1430M358 1540Q360 1505 380 1508L520 1525L540 1545M820 1540Q815 1490 835 1490Q855 1510 855 1540M945 1540Q1000 1495 1025 1515V1540" />
      </g>
    </svg>
  );
}

/* ---------- Page ---------- */

function ChatHeader() {
  return (
    <header className="flex h-[147px] shrink-0 items-center bg-[#008069] pr-[60px] pb-[21px] pl-6 text-white">
      <button type="button" aria-label="Back">
        <svg viewBox="0 0 48 48" className="size-12" fill="none" stroke="currentColor" strokeWidth="6" aria-hidden="true">
          <path d="M27 2L4 24L27 46M4 24H48" />
        </svg>
      </button>
      <svg viewBox="0 0 105 105" className="ml-3 size-[105px] shrink-0" aria-hidden="true">
        <circle cx="52.5" cy="52.5" r="52.5" fill="#cfd8df" />
        <circle cx="52.5" cy="46" r="17.5" fill="#fff" />
        <path d="M18 90Q28 70 52 70T87 90Q73 103 52 103T18 90Z" fill="#fff" />
      </svg>
      <div className="ml-5 pt-[6px]">
        <h1 className="font-['DejaVu_Sans'] text-[65px] leading-[65px] font-bold text-[#e3f1ee]">Darling</h1>
        <p className="ml-1 text-[39px] leading-[42px] text-[#def2ee]">last seen today at 08:39</p>
      </div>
      <div className="ml-auto flex items-center gap-[88px]">
        <button type="button" aria-label="Video call">
          <svg viewBox="222 135 180 117" className="h-[39px] w-[60px]" fill="currentColor" aria-hidden="true">
            <rect x="222" y="135" width="132" height="117" rx="18" />
            <path d="M360 178Q360 172 366 168L388 152Q402 145 402 158V230Q402 241 390 236L364 217Q360 213 360 208Z" />
          </svg>
        </button>
        <button type="button" aria-label="Voice call">
          <svg viewBox="666 117 174 153" className="h-[51px] w-[58px]" fill="currentColor" aria-hidden="true">
            <path d="M682 117H702Q717 117 717 132Q721 150 719 158Q717 166 698 182Q716 215 754 241L770 225Q775 219 785 219L806 222Q822 224 822 238V255Q822 270 804 270Q750 268 712 228Q668 185 667 132Q668 117 682 117Z" />
          </svg>
        </button>
        <button type="button" aria-label="More options">
          <svg viewBox="0 0 12 48" className="h-12 w-3" fill="currentColor" aria-hidden="true">
            <circle cx="6" cy="6" r="6" />
            <circle cx="6" cy="24" r="6" />
            <circle cx="6" cy="42" r="6" />
          </svg>
        </button>
      </div>
    </header>
  );
}

function MessageBubble() {
  return (
    <article className="mt-[22px] mr-[69px] self-end rounded-[36px] bg-[#e4ffdb] pt-[18px] pr-[37px] pb-[14px] pl-8 text-[48px] leading-[56px] text-[#111b21] shadow-[0_2px_2px_rgba(0,0,0,0.14)]">
      <p className="flex h-[81px] items-center gap-[17px]">
        <SmileIcon />
        I send you the shopping list:
      </p>
      <ul className="mt-[57px]">
        {shoppingList.map(({ id, label, Icon }) => (
          <li key={id} className="flex h-[81px] items-center gap-[17px]">
            <Icon />
            {label}
          </li>
        ))}
      </ul>
      <div className="-mt-[27px] flex h-9 items-center justify-end gap-3 pr-1 text-[36px] leading-9 text-[#667a7f]">
        <time>08:49</time>
        <svg viewBox="0 0 34 30" className="h-[30px] w-[34px]" fill="none" stroke="#7d9298" strokeWidth="4" strokeLinecap="round" aria-label="Sent">
          <path d="M3 18L12 26L31 2" />
        </svg>
      </div>
    </article>
  );
}

function Banner() {
  return (
    <footer className="flex h-[276px] shrink-0 items-center justify-center bg-linear-to-r from-[#11cb62] to-[#0ad6b4] to-90% px-8 pt-2">
      <h2 className="text-center font-['Roboto_Condensed',Roboto,sans-serif] text-[101px] leading-[120px] font-black text-white uppercase [-webkit-text-stroke:2px_white] [text-shadow:8px_0_#06553e,-8px_0_#06553e,0_8px_#06553e,0_-8px_#06553e,6px_6px_#06553e,-6px_6px_#06553e,6px_-6px_#06553e,-6px_-6px_#06553e,3px_7px_#06553e,-3px_7px_#06553e,3px_-7px_#06553e,-3px_-7px_#06553e,7px_3px_#06553e,-7px_3px_#06553e,7px_-3px_#06553e,-7px_-3px_#06553e]">
        Send the list via
        <br />
        WhatsApp!
      </h2>
    </footer>
  );
}

function App() {
  return (
    <div className="flex min-h-screen flex-col font-[Roboto,sans-serif]">
      <ChatHeader />
      <main className="relative flex-1 overflow-hidden bg-[#efe6dd]">
        <Wallpaper />
        <div className="relative flex flex-col pt-[14px] pb-8">
          <p className="self-center rounded-3xl bg-[#f7f7f7] px-[26px] pt-6 pb-5 text-[39px] leading-[39px] font-medium text-[#54656f] shadow-[0_2px_2px_rgba(0,0,0,0.14)]">
            July 1, 2022
          </p>
          <MessageBubble />
        </div>
      </main>
      <Banner />
    </div>
  );
}

export default App;
